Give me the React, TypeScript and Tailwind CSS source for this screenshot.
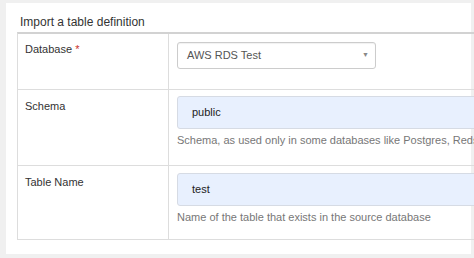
type Field = {
    label: string;
    required?: boolean;
    value: string;
    help?: string;
    kind: 'select' | 'input';
};

const fields: Field[] = [
    { label: 'Database', required: true, value: 'AWS RDS Test', kind: 'select' },
    { label: 'Schema', value: 'public', help: 'Schema, as used only in some databases like Postgres, Redshift and DB2', kind: 'input' },
    { label: 'Table Name', value: 'test', help: 'Name of the table that exists in the source database', kind: 'input' },
];

export default function App() {
    return (
        <div
            className="w-[474px] h-[258px] overflow-hidden bg-[#f0f0f0] pl-[6px] pt-[3px]"
            style={{ fontFamily: '"Liberation Sans", Arial, sans-serif' }}
        >
            {/* Panel */}
            <div className="w-[465px] h-[251px] bg-white pl-[11px] pt-[11px]">
                <h4 className="pl-[3px] text-[12px] leading-[16px] text-[#333] mb-[2px]">Import a table definition</h4>

                {/* Definition table */}
                <div className="w-[540px] border-l border-b border-[#dddddd] border-t-2 border-t-[#d2d2d2]">
                    {fields.map((f, i) => (
                        <div key={f.label} className={i > 0 ? 'flex border-t border-[#dddddd]' : 'flex'}>
                            <div className={`w-[151px] shrink-0 border-r border-[#dddddd] pl-[7px] text-[11px] leading-[15px] text-[#333] ${i === 0 ? 'pt-[8px]' : 'pt-[9px]'}`}>
                                {f.label}
                                {f.required && <span className="text-[#c9302c]"> *</span>}
                            </div>
                            {f.kind === 'select' ? (
                                <div className="flex-1 pl-[8px] pt-[8px] pb-[20px]">
                                    <div className="w-[199px] h-[27px] flex items-center justify-between rounded-[3px] border border-[#cccccc] bg-white pl-[9px] pr-[6px] text-[11px] text-[#555] shadow-[inset_0_1px_1px_rgba(0,0,0,0.06)]">
                                        <span>{f.value}</span>
                                        <span className="text-[7px] text-[#888]">▼</span>
                                    </div>
                                </div>
                            ) : (
                                <div className={`flex-1 pl-[8px] ${i === 1 ? 'pt-[6px] pb-[17px]' : 'pt-[7px] pb-[14px]'}`}>
                                    <div className="h-[33px] flex items-center rounded-[3px] border border-[#d6dbe4] bg-[#e8f0fe] pl-[14px] text-[11px] text-[#222]">
                                        {f.value}
                                    </div>
                                    <p className="mt-[4px] text-[11px] leading-[15px] text-[#777] whitespace-nowrap">{f.help}</p>
                                </div>
                            )}
                        </div>
                    ))}
                </div>
            </div>
        </div>
    );
}
